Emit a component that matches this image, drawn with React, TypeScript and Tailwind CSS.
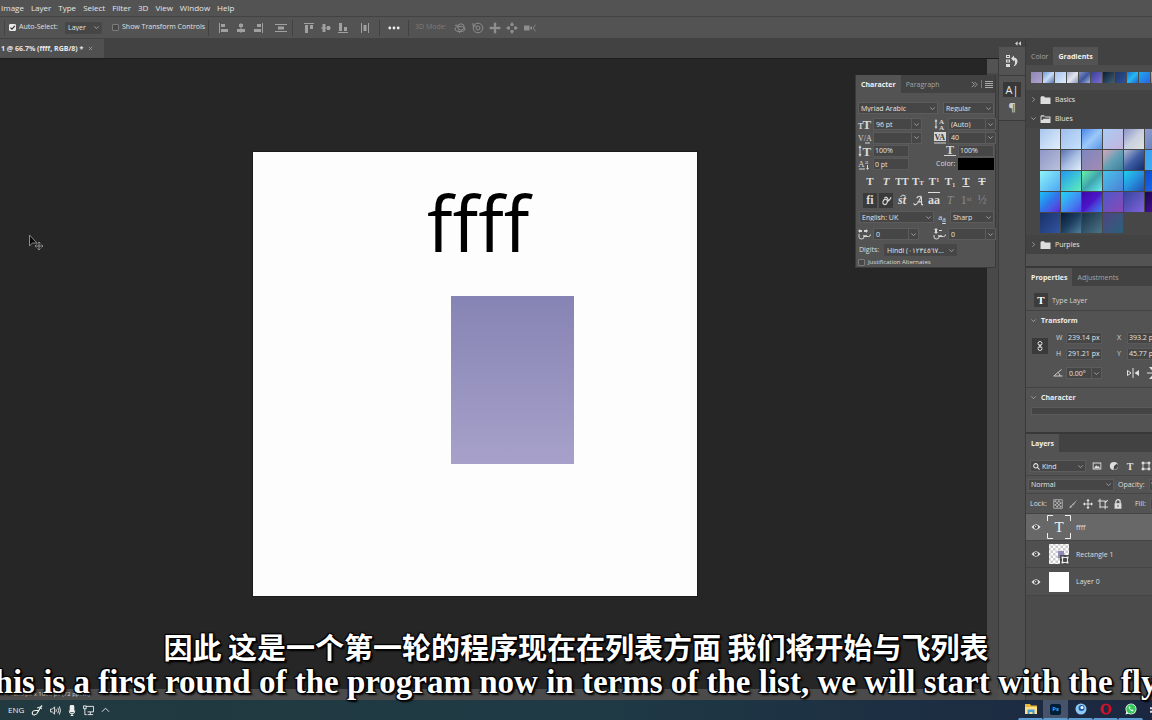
import React from "react";

const cx = (...parts: (string | false | undefined)[]) => parts.filter(Boolean).join(" ");

function Chevron({ className }: { className?: string }) {
  return (
    <svg viewBox="0 0 8 8" className={cx("size-[7px] shrink-0", className)} fill="none" stroke="#a9a9a9" strokeWidth="1">
      <path d="M1.5 2.8 4 5.3l2.5-2.5" />
    </svg>
  );
}

function Drop({ label, value, className, split }: { label: string; value: string; className: string; split?: boolean }) {
  return (
    <span className={cx("relative flex h-3 shrink-0 items-center border border-[#5c5c5c] bg-[#464646]", className)}>
      <select
        aria-label={label}
        className="h-full w-full min-w-0 appearance-none truncate bg-transparent pr-2 pl-[2px] leading-none text-[#e4e4e4] outline-none"
      >
        <option>{value}</option>
      </select>
      <span
        className={cx(
          "pointer-events-none absolute inset-y-0 right-0 flex items-center px-[1px]",
          split && "border-l border-[#5c5c5c]",
        )}
      >
        <Chevron />
      </span>
    </span>
  );
}

function Field({ label, value, className }: { label: string; value: string; className: string }) {
  return (
    <input
      aria-label={label}
      defaultValue={value}
      className={cx("h-3 min-w-0 border border-[#5a5a5a] bg-[#464646] px-px leading-none text-[#e4e4e4] outline-none", className)}
    />
  );
}

function Check({ label, checked, className }: { label: string; checked?: boolean; className?: string }) {
  return (
    <label className={cx("flex items-center gap-[3px] whitespace-nowrap", className)}>
      <span className="relative flex size-[7px]">
        <input
          type="checkbox"
          defaultChecked={checked}
          className="size-[7px] appearance-none rounded-[1px] border border-[#7c7c7c] bg-[#484848] checked:border-[#e8e8e8] checked:bg-[#e8e8e8]"
        />
        {checked && (
          <svg viewBox="0 0 7 7" className="pointer-events-none absolute inset-0" fill="none" stroke="#333" strokeWidth="1.2">
            <path d="M1.4 3.6 3 5.2 5.8 1.8" />
          </svg>
        )}
      </span>
      {label}
    </label>
  );
}

function Sep() {
  return <span className="h-4 w-px shrink-0 bg-[#414141]" />;
}

function Ico({
  label,
  children,
  className,
  box = "0 0 12 12",
}: {
  label: string;
  children: React.ReactNode;
  className?: string;
  box?: string;
}) {
  return (
    <button type="button" aria-label={label} className={cx("flex shrink-0 items-center justify-center", className)}>
      <svg viewBox={box} className="h-3 w-3" fill="currentColor">
        {children}
      </svg>
    </button>
  );
}

function MenuBar() {
  const items = ["Image", "Layer", "Type", "Select", "Filter", "3D", "View", "Window", "Help"];
  return (
    <nav className="flex h-[17px] items-center gap-[7px] border-b border-[#424242] bg-[#535353] pl-px text-[8px] text-[#e6e6e6]">
      {items.map((m) => (
        <button type="button" key={m} className="leading-none">
          {m}
        </button>
      ))}
    </nav>
  );
}

function OptionsBar() {
  return (
    <div className="flex h-[22px] items-center border-b border-[#424242] bg-[#535353] text-[7px] text-[#e0e0e0]">
      <span className="ml-1 h-4 w-px bg-[#454545]" />
      <Check label="Auto-Select:" checked className="ml-1 w-14" />
      <Drop label="Auto-select target" value="Layer" className="w-[37px] border-[#474747]" />
      <Check label="Show Transform Controls" className="ml-[10px] w-24" />
      <Sep />
      <div className="flex items-center pl-[6px] text-[#a0a0a0]">
        <Ico label="Align left edges" className="w-[17px]">
          <path d="M1 1h1v10H1zM3 2h4v3H3zM3 7h7v3H3z" />
        </Ico>
        <Ico label="Align horizontal centers" className="w-[17px]">
          <path d="M5.5 1h1v10h-1zM4 2h4v3H4zM2 7h8v3H2z" />
        </Ico>
        <Ico label="Align right edges" className="w-[17px]">
          <path d="M10 1h1v10h-1zM5 2h4v3H5zM2 7h7v3H2z" />
        </Ico>
        <Ico label="Distribute vertically" className="ml-[6px] w-[18px]">
          <path d="M0 2h12v1H0zM0 9h12v1H0zM3 4.5h6v3H3z" />
        </Ico>
      </div>
      <span className="ml-[2px] h-4 w-px bg-[#414141]" />
      <div className="flex items-center pl-[7px] text-[#a0a0a0]">
        <Ico label="Align top edges" className="w-[17px]">
          <path d="M1 1h10v1H1zM2 3h3v8H2zM7 3h3v4H7z" />
        </Ico>
        <Ico label="Align vertical centers" className="w-[17px]">
          <path d="M1 5.5h10v1H1zM2.500 2h3v8h-3zM7 4h3v4H7z" />
        </Ico>
        <Ico label="Align bottom edges" className="w-[18px]">
          <path d="M1 10h10v1H1zM2 1h3v8H2zM7 5h3v4H7z" />
        </Ico>
        <Ico label="Distribute horizontally" className="ml-[6px] w-[14px]">
          <path d="M2 1h1v10H2zM9 1h1v10H9zM4.500 3h3v6h-3z" />
        </Ico>
      </div>
      <span className="ml-[7px] h-4 w-px bg-[#414141]" />
      <Ico label="More options" className="mx-2 w-3 text-[#eeeeee]">
        <circle cx="1.800" cy="6" r="1.400" />
        <circle cx="6" cy="6" r="1.400" />
        <circle cx="10.200" cy="6" r="1.400" />
      </Ico>
      <Sep />
      <span className="ml-[6px] w-9 whitespace-nowrap text-[#7c7c7c]">3D Mode:</span>
      <div className="flex items-center text-[#8e8e8e]">
        <Ico label="Orbit" className="w-[18px]">
          <g fill="none" stroke="currentColor">
            <ellipse cx="6" cy="7" rx="5" ry="2.500" />
            <circle cx="7" cy="5" r="3.200" />
            <path d="M1 3.500 3.500 3M4 8.500 6 11" />
          </g>
        </Ico>
        <Ico label="Roll" className="w-[17px]">
          <g fill="none" stroke="currentColor">
            <circle cx="6" cy="6" r="4.800" />
            <circle cx="6" cy="6" r="2" />
            <path d="M1 1v3h3" />
          </g>
        </Ico>
        <Ico label="Pan" className="w-[17px]">
          <path d="m6 0 2 2.500H7V5h2.500V4L12 6 9.500 8V7H7v2.500h1L6 12 4 9.500h1V7H2.500v1L0 6l2.500-2v1H5V2.500H4z" />
          <circle cx="6" cy="6" r="2" />
        </Ico>
        <Ico label="Slide" className="w-[18px]">
          <path d="m6 0 2 2.500-1 1.500H5L4 2.500zM0 6l2.500-2L4 5v2L2.500 8zM12 6 9.500 4 8 5v2l1.500 1zM6 12l2-2.500L7 8H5L4 9.500z" />
        </Ico>
        <Ico label="Zoom camera" className="w-[18px]">
          <path d="M0 3.500h5.500v5H0zM5.500 6 8 4v4zM11.500 2v1L9.800 6l1.700 3v1L8.900 6z" />
        </Ico>
      </div>
    </div>
  );
}

function Serif({ children, className }: { children: React.ReactNode; className?: string }) {
  return <span className={cx("font-['Liberation_Serif',serif]", className)}>{children}</span>;
}

function PanelTabs({ tabs, active }: { tabs: string[]; active: number }) {
  return (
    <div role="tablist" className="flex h-[18px] shrink-0 bg-[#424242]">
      {tabs.map((t, i) => (
        <button
          type="button"
          role="tab"
          aria-selected={i === active}
          key={t}
          className={cx(
            "px-[5px] text-[7px] leading-none",
            i === active ? "bg-[#535353] font-bold text-[#f0f0f0]" : "text-[#a2a2a2]",
          )}
        >
          {t}
        </button>
      ))}
    </div>
  );
}

function CharIcon({ children }: { children: React.ReactNode }) {
  return (
    <svg viewBox="0 0 14 12" className="h-3 w-[14px] shrink-0 overflow-visible font-['Liberation_Serif',serif]" fill="#d6d6d6" stroke="none">
      {children}
    </svg>
  );
}

function CharacterPanel() {
  const row = "grid grid-cols-[75px_1fr] items-center";
  const cell = "flex items-center gap-[1px]";
  return (
    <section className="absolute top-0 right-[156px] z-10 w-[141px] border border-t-0 border-[#3a3a3a] bg-[#535353] text-[7px] text-[#dcdcdc]">
      <div className="relative">
        <PanelTabs tabs={["Character", "Paragraph"]} active={0} />
        <div className="absolute top-[5px] right-[2px] flex items-center gap-[3px] text-[#a8a8a8]">
          <svg viewBox="0 0 8 8" className="size-[7px]" fill="none" stroke="currentColor">
            <path d="m1 1 3 3-3 3M4 1l3 3-3 3" />
          </svg>
          <span className="h-2 w-px bg-[#777777]" />
          <svg viewBox="0 0 8 8" className="size-2" fill="currentColor">
            <path d="M0 1h8v1H0zM0 3h8v1H0zM0 5h8v1H0zM0 7h8v1H0z" />
          </svg>
        </div>
      </div>
      <div className="flex flex-col pt-2 pr-px pl-[2px]">
        <div className="flex h-[14px] items-center justify-between">
          <Drop label="Font family" value="Myriad Arabic" className="w-20" />
          <Drop label="Font style" value="Regular" className="w-[51px]" />
        </div>
        <div className={cx(row, "mt-[2px] h-[14px]")}>
          <div className={cell}>
            <CharIcon>
              <text x="0" y="11" fontSize="8" fontWeight="700">T</text>
              <text x="4.500" y="11" fontSize="13" fontWeight="700">T</text>
            </CharIcon>
            <Drop split label="Font size" value="96 pt" className="w-[49px]" />
          </div>
          <div className={cell}>
            <CharIcon>
              <text x="6" y="6" fontSize="7" fontWeight="700">A</text>
              <text x="6" y="12" fontSize="7" fontWeight="700">A</text>
              <path d="M3 1 4.500 3.500h-1v5h1L3 11 1.500 8.500h1v-5h-1z" />
            </CharIcon>
            <Drop split label="Leading" value="(Auto)" className="w-12" />
          </div>
        </div>
        <div className={cx(row, "h-[13px]")}>
          <div className={cell}>
            <CharIcon>
              <text x="0" y="9" fontSize="8">V/A</text>
              <path d="M7 10.500h5v1H7z" />
            </CharIcon>
            <Drop split label="Kerning" value="" className="w-[49px]" />
          </div>
          <div className={cell}>
            <CharIcon>
              <path d="M1 0h12v9H1zM1 10.500h12v1H1z" />
              <text x="1.500" y="8" fontSize="8" fontWeight="700" fill="#3c3c3c">VA</text>
            </CharIcon>
            <Drop split label="Tracking" value="40" className="w-12" />
          </div>
        </div>
        <div className={cx(row, "h-[13px]")}>
          <div className={cell}>
            <CharIcon>
              <path d="m2 0 1.500 3h-1v6h1L2 12 .5 9h1V3h-1z" />
              <text x="4.500" y="11" fontSize="13" fontWeight="700">T</text>
            </CharIcon>
            <Field label="Vertical scale" value="100%" className="w-9" />
          </div>
          <div className={cx(cell, "justify-end")}>
            <CharIcon>
              <text x="3" y="9" fontSize="12" fontWeight="700">T</text>
              <path d="M1 10h12v1H1z" />
            </CharIcon>
            <Field label="Horizontal scale" value="100%" className="w-9" />
          </div>
        </div>
        <div className={cx(row, "h-[14px]")}>
          <div className={cell}>
            <CharIcon>
              <text x="0" y="9" fontSize="9">A</text>
              <text x="7" y="6" fontSize="7">a</text>
              <path d="M1 10.500h6v1H1zM9 7h1v3h1l-1.500 2L8 10h1z" />
            </CharIcon>
            <Field label="Baseline shift" value="0 pt" className="w-9" />
          </div>
          <div className="flex items-center justify-between">
            <span className="pl-[3px]">Color:</span>
            <button type="button" aria-label="Text color" className="h-3 w-9 bg-black" />
          </div>
        </div>
        <div className="flex h-5 items-center pl-1 text-[11px] leading-none font-bold text-[#dedede]">
          <button type="button" className="w-4"><Serif>T</Serif></button>
          <button type="button" className="w-4"><Serif className="italic">T</Serif></button>
          <button type="button" className="w-4"><Serif className="text-[10px]">TT</Serif></button>
          <button type="button" className="w-4"><Serif>T<span className="text-[7px]">T</span></Serif></button>
          <button type="button" className="w-4"><Serif>T<sup className="text-[6px]">1</sup></Serif></button>
          <button type="button" className="w-4"><Serif>T<sub className="text-[6px]">1</sub></Serif></button>
          <button type="button" className="w-4"><Serif className="underline">T</Serif></button>
          <button type="button" className="w-4"><Serif className="line-through">T</Serif></button>
        </div>
        <div className="flex h-[18px] items-center pl-1 text-[12px] leading-none text-[#dedede]">
          <button type="button" className="h-[15px] w-4 border-x border-[#535353] bg-[#3a3a3a] font-bold"><Serif>fi</Serif></button>
          <button type="button" aria-label="Contextual alternates" className="flex h-[15px] w-4 items-center justify-center border-x border-[#535353] bg-[#3a3a3a]">
            <svg viewBox="0 0 12 12" className="size-[11px]" fill="none" stroke="currentColor" strokeWidth="1.200">
              <ellipse cx="4.500" cy="7.500" rx="2.300" ry="3" transform="rotate(25 4.500 7.500)" />
              <path d="M3.500 3.500Q5 1.500 6.500 3T8 6.500Q9.500 6 11 2.500" />
            </svg>
          </button>
          <button type="button" className="relative w-4">
            <Serif className="font-bold italic">st</Serif>
            <svg viewBox="0 0 6 3" className="absolute top-0 left-[6px] h-[3px] w-[6px]" fill="none" stroke="currentColor">
              <path d="M.5 3Q2-.5 5.500 2" />
            </svg>
          </button>
          <button type="button" aria-label="Swash" className="flex w-4 justify-center">
            <svg viewBox="0 0 12 12" className="size-[11px]" fill="none" stroke="currentColor" strokeWidth="1.200">
              <path d="M1 9q0 2 2 1.500T9 1.500L9.500 10.500h1.500M5 7.500h4.500M9 1.500Q5 1 4 3.500" />
            </svg>
          </button>
          <button type="button" className="w-4"><Serif className="font-bold overline">aa</Serif></button>
          <button type="button" className="w-4 text-[#8a8a8a]"><Serif className="italic">T</Serif></button>
          <button type="button" className="w-4 text-[#8a8a8a]"><Serif>1<sup className="text-[7px]">st</sup></Serif></button>
          <button type="button" className="w-4 text-[#8a8a8a]"><Serif>½</Serif></button>
        </div>
        <div className="flex h-4 items-center justify-between">
          <Drop label="Language" value="English: UK" className="ml-px w-[75px]" />
          <Serif className="text-[9px] leading-none">a<sub className="text-[8px] underline">a</sub></Serif>
          <Drop label="Anti-aliasing" value="Sharp" className="w-11" />
        </div>
        <div className={cx(row, "h-[18px]")}>
          <div className={cell}>
            <CharIcon>
              <path d="M0 3l2-2v1h2v2H2v1zM10 3 8 1v1H6v2h2v1z" />
              <path d="M1 6v3q0 2 2.500 2T6 9V7v1.500h2V7v1.500h2.500q2 0 2-2" fill="none" stroke="#d6d6d6" />
            </CharIcon>
            <Drop split label="Kashida width" value="0" className="w-[46px]" />
          </div>
          <div className={cell}>
            <CharIcon>
              <path d="M3 0l2 2H4v2h1L3 6 1 4h1V2H1zM6 2h3v1H6z" />
              <path d="M1 7v2q0 2 2.500 2T6 9V7v1.500h2V7v1.500h2.500q2 0 2-2" fill="none" stroke="#d6d6d6" />
            </CharIcon>
            <Drop split label="Diacritic position" value="0" className="w-12" />
          </div>
        </div>
        <div className="flex h-[14px] items-center gap-1">
          <span className="w-[22px] pl-px">Digits:</span>
          <Drop label="Digits" value="Hindi (٠١٢٣٤٥٦٧..." className="w-[73px] border-[#474747]" />
        </div>
        <Check label="Justification Alternates" className="h-[10px] text-[6px]" />
      </div>
    </section>
  );
}

function Workspace() {
  return (
    <section className="flex min-w-0 flex-1 flex-col">
      <div className="flex h-5 shrink-0 border-b border-[#1f1b20] bg-[#424242]">
        <button
          type="button"
          className="flex w-26 items-center gap-[5px] bg-[#505050] pl-px text-[7px] leading-none font-bold whitespace-nowrap text-[#e8e8e8]"
        >
          1 @ 66.7% (ffff, RGB/8) *
          <svg viewBox="0 0 6 6" className="size-[5px] shrink-0" fill="none" stroke="#9a9a9a">
            <path d="m1 1 4 4M5 1 1 5" />
          </svg>
        </button>
      </div>
      <div className="flex min-h-0 flex-1">
        <div className="min-w-0 flex-1 overflow-hidden bg-[#262626] pt-[92px] pl-[252px]">
          <div className="flex size-[446px] flex-col items-start border border-[#1b1b1b] bg-[#fdfdfd] pl-[198px]">
            <p className="-ml-6 h-[144px] pt-[21px] text-[76px] leading-[100px] text-black">ffff</p>
            <div className="h-[168px] w-[123px] bg-linear-to-b from-[#8684b4] to-[#a7a1ca]" />
          </div>
        </div>
        <div className="w-3 shrink-0 border-r border-[#3c3c3c] bg-[#494949]">
          <div className="h-[14px] bg-[#535353]" />
        </div>
      </div>
      <div className="h-[11px] shrink-0 bg-[#4b4b4b] pl-[10px] text-[6px] leading-[11px] text-[#cfcfcf]">
        1000 px x 1000 px (72 ppcm)
      </div>
    </section>
  );
}

function Dock() {
  return (
    <aside className="flex w-[26px] shrink-0 flex-col bg-[#4c4c4c]">
      <div className="flex h-2 items-center justify-end bg-[#424242] pr-1 text-[#d0d0d0]">
        <svg viewBox="0 0 8 6" className="h-[5px] w-[6px]" fill="currentColor">
          <path d="M3.500 0v6L0 3zM8 0v6L4.500 3z" />
        </svg>
      </div>
      <div className="flex h-[29px] items-center justify-center border-b border-[#3b3b3b] bg-[#535353]">
        <Ico label="History" className="w-5 text-[#dcdcdc]">
          <path d="M0 0h4v3H0zM0 4.500h4v3H0zM0 9h4v3H0z" />
          <path d="M1 1h2v1H1zM1 5.500h2v1H1z" fill="#535353" />
          <path d="M5 3.500 8 .5v2q3.500.5 3.500 4-.3 3.500-4 5 2-3 1.500-4.500Q8.800 5 8 5v1.500z" />
        </Ico>
      </div>
      <div className="flex h-[45px] flex-col items-center border-b border-[#3b3b3b] bg-[#535353] pt-[6px]">
        <button type="button" aria-label="Character" className="h-[15px] w-[18px] bg-[#383838] text-[11px] leading-[14px] text-[#e8e8e8]">
          A|
        </button>
        <button type="button" aria-label="Paragraph" className="mt-[3px] text-[11px] leading-[14px] font-bold text-[#cfcfcf]">
          ¶
        </button>
      </div>
      <div className="flex-1 bg-[#4f4f4f]" />
    </aside>
  );
}

const recent = [
  "from-[#8e86b8] to-[#b2a4cc]",
  "from-[#6f97dd] via-[#c8dcf5] to-[#5674b5]",
  "from-[#a9c4ec] to-[#dcebfa]",
  "from-[#a2a9cc] via-[#e3e6ef] to-[#8f97c2]",
  "from-[#8790c0] via-[#3d569d] to-[#a7b7da]",
  "from-[#3c3e94] to-[#7a6fd2]",
  "from-[#0c1e35] to-[#3e6177]",
  "from-[#1e3768] to-[#2f529a]",
  "from-[#1c75dd] via-[#29b8ee] to-[#2360d8]",
  "from-[#20a8ec] to-[#2c62e4]",
  "from-[#4bd0ed] to-[#2b6be4]",
];

const blues = [
  "from-[#a9c6ee] to-[#e2effb]",
  "from-[#9fbdee] to-[#c7e2fb]",
  "from-[#4a86e6] via-[#9cc8fa] to-[#5795e8]",
  "from-[#a9cdf4] to-[#c2b3dd]",
  "from-[#8c93c4] via-[#c8cfe0] to-[#dfe3dc]",
  "from-[#8f9ccc] to-[#5b79bb]",
  "from-[#8f97c8] to-[#bac0da]",
  "from-[#5c71b4] via-[#a6bce0] to-[#e1f0fa]",
  "from-[#7d86bd] to-[#a48bb5]",
  "from-[#d4a5bb] via-[#61a0b4] to-[#3f7f9c]",
  "from-[#b5b9d4] via-[#3e5ea3] to-[#142a6d]",
  "from-[#3d9cf0] to-[#3fb9f5]",
  "from-[#8ff3f6] to-[#4da7f3]",
  "from-[#2496ef] to-[#62edb5]",
  "from-[#6bf3a2] via-[#3fa4ae] to-[#67edf0]",
  "from-[#45c3e9] to-[#4d7fd6]",
  "from-[#1ad1ed] via-[#2890dc] to-[#2050b5]",
  "from-[#0a4ad0] to-[#2176ef]",
  "from-[#19bff5] via-[#2f74ea] to-[#5a1ddb]",
  "from-[#12d6f7] to-[#4c43e9]",
  "from-[#3e06a9] via-[#4c16c9] to-[#2d7df0]",
  "from-[#4a57cc] to-[#8848b4]",
  "from-[#34459e] to-[#8163dd]",
  "from-[#1c0554] to-[#5316a8]",
  "from-[#1a3167] to-[#3155a2]",
  "from-[#061a38] via-[#1e3f60] to-[#52809b]",
  "from-[#193246] to-[#4c7589]",
  "from-[#4c4483] to-[#26617a]",
];

function Folder({ open }: { open?: boolean }) {
  return (
    <svg viewBox="0 0 11 8" className="h-2 w-[11px] shrink-0">
      <path d="M.5 1.500V8h10V1.500H5L4 .3H1.200z" fill="#dddddd" />
      {open && <path d="M1.500 1.500h3L5.500 2.500h4v1.200h-6L2.500 5h-1z" fill="#4a4a4a" />}
    </svg>
  );
}

function GroupRow({ name, open }: { name: string; open?: boolean }) {
  return (
    <button type="button" className="flex h-[19px] w-full items-center bg-[#434343] pl-1 text-[7px] leading-none text-[#e6e6e6]">
      <Chevron className={cx("mr-[3px]", !open && "-rotate-90")} />
      <Folder open={open} />
      <span className="ml-1">{name}</span>
    </button>
  );
}

function GradientsPanel() {
  return (
    <section>
      <div className="h-2 bg-[#424242]" />
      <PanelTabs tabs={["Color", "Gradients"]} active={1} />
      <div className="flex h-[25px] gap-px bg-[#4c4c4c] pt-[7px] pl-[5px]">
        {recent.map((g, i) => (
          <button type="button" aria-label={"Recent gradient " + (i + 1)} key={g} className={cx("h-[11px] w-[11px] shrink-0 bg-linear-135", g)} />
        ))}
      </div>
      <GroupRow name="Basics" />
      <GroupRow name="Blues" open />
      <div className="grid grid-cols-[repeat(6,20px)] gap-px bg-[#474747] pt-px pb-[2px] pl-[14px]">
        {blues.map((g, i) => (
          <button type="button" aria-label={"Blue gradient " + (i + 1)} key={g} className={cx("size-5 bg-linear-135", g)} />
        ))}
      </div>
      <GroupRow name="Purples" />
      <div className="h-[14px] border-b-2 border-[#383838] bg-[#535353]" />
    </section>
  );
}

function SectionHead({ name }: { name: string }) {
  return (
    <h3 className="flex h-[19px] items-center gap-1 border-t border-[#434343] pl-1 font-bold text-[#ececec]">
      <Chevron />
      {name}
    </h3>
  );
}

function PropertiesPanel() {
  return (
    <section className="h-[166px] border-b-2 border-[#383838] bg-[#535353] text-[7px] leading-none text-[#d4d4d4]">
      <PanelTabs tabs={["Properties", "Adjustments"]} active={0} />
      <div className="flex h-6 items-center gap-1 pt-1 pl-2">
        <span className="flex size-[14px] items-center justify-center bg-[#3c3c3c] text-[11px] text-white">
          <Serif className="font-bold">T</Serif>
        </span>
        Type Layer
      </div>
      <SectionHead name="Transform" />
      <div className="flex h-[33px] items-center">
        <button type="button" aria-label="Link width and height" className="ml-[6px] flex h-4 w-4 shrink-0 items-center justify-center bg-[#3a3a3a]">
          <svg viewBox="0 0 6 10" className="h-[10px] w-[6px]" fill="none" stroke="#dddddd">
            <rect x="1" y=".5" width="4" height="4" rx="2" />
            <rect x="1" y="5.500" width="4" height="4" rx="2" />
            <path d="M3 3v4" />
          </svg>
        </button>
        <div className="ml-2 grid shrink-0 grid-cols-[10px_36px_25px_36px] items-center gap-y-1">
          <span>W</span>
          <Field label="Width" value="239.14 px" className="w-9" />
          <span className="pl-[15px]">X</span>
          <Field label="X position" value="393.2 px" className="w-9" />
          <span>H</span>
          <Field label="Height" value="291.21 px" className="w-9" />
          <span className="pl-[15px]">Y</span>
          <Field label="Y position" value="45.77 px" className="w-9" />
        </div>
      </div>
      <div className="flex h-[22px] items-center pl-[27px]">
        <svg viewBox="0 0 10 8" className="h-2 w-[10px] shrink-0" fill="none" stroke="#cccccc">
          <path d="M8.500.5.8 7h8.700M5 3.500q2 1.200 2 3.500" />
        </svg>
        <Drop split label="Angle" value="0.00°" className="ml-[3px] w-9" />
        <svg viewBox="0 0 12 10" className="ml-[25px] h-[10px] w-3 shrink-0" fill="#e0e0e0">
          <path d="M12 2v6L7.500 5zM5.500 0h1v10h-1z" />
          <path d="M.5 2.500v5L4 5z" fill="none" stroke="#e0e0e0" />
        </svg>
        <svg viewBox="0 0 12 12" className="ml-2 h-3 w-3 shrink-0" fill="#e0e0e0">
          <path d="M2 0h7L6 4.500zM0 5.500h12v1H0zM2 12h7L6 7.500z" />
        </svg>
      </div>
      <div className="pt-[3px]">
        <SectionHead name="Character" />
      </div>
      <div className="mt-[1px] ml-[5px] h-2 w-full border border-[#5b5b5b] bg-[#444444]" />
    </section>
  );
}

function Eye() {
  return (
    <button type="button" aria-label="Toggle visibility" className="flex h-full w-5 shrink-0 items-center justify-center">
      <svg viewBox="0 0 10 8" className="h-2 w-[10px]">
        <path d="M.5 4Q5-1.500 9.500 4 5 9.500.5 4z" fill="#e6e6e6" />
        <circle cx="5" cy="4" r="2" fill="#444444" />
        <circle cx="4.600" cy="3.600" r=".7" fill="#e6e6e6" />
      </svg>
    </button>
  );
}

function LayersPanel() {
  return (
    <section className="flex min-h-0 flex-1 flex-col bg-[#4b4b4b] text-[7px] leading-none text-[#dedede]">
      <PanelTabs tabs={["Layers"]} active={0} />
      <div className="flex h-6 shrink-0 items-center gap-[5px] border-b border-[#464646] bg-[#535353] pt-[5px] pl-1">
        <span className="relative flex shrink-0">
          <Drop label="Filter kind" value="Kind" className="w-14 pl-[9px]" />
          <svg viewBox="0 0 8 8" className="pointer-events-none absolute top-[3px] left-[3px] size-[7px]" fill="none" stroke="#e4e4e4" strokeWidth="1.200">
            <circle cx="3.200" cy="3.200" r="2.500" />
            <path d="M5 5l2.500 2.500" />
          </svg>
        </span>
        <Ico label="Filter pixel layers" className="w-3" box="-1 -1 14 14">
          <path d="M1 2h10v8H1zM2 3v6h8V3z" fillRule="evenodd" />
          <path d="M2.500 8.500 5 5l2 2 1-1 1.500 2.500z" />
        </Ico>
        <Ico label="Filter adjustment layers" className="w-3" box="-1 -1 14 14">
          <circle cx="6" cy="6" r="4.800" />
          <path d="M6 6 9.500 3a4.500 4.500 0 0 1-4 7.400z" fill="#454545" />
        </Ico>
        <button type="button" aria-label="Filter type layers" className="w-3 text-[10px]"><Serif className="font-bold">T</Serif></button>
        <Ico label="Filter shape layers" className="w-3" box="-1 -1 14 14">
          <path d="M2.500 2.500h7v7h-7z" fill="none" stroke="currentColor" />
          <path d="M1 1h3v3H1zM8 1h3v3H8zM1 8h3v3H1zM8 8h3v3H8z" />
        </Ico>
      </div>
      <div className="flex h-[18px] shrink-0 items-center gap-1 border-b border-[#464646] bg-[#535353] pl-[2px]">
        <Drop label="Blend mode" value="Normal" className="w-[86px]" />
        <span>Opacity:</span>
        <Field label="Opacity" value="100%" className="w-8 shrink-0" />
      </div>
      <div className="flex h-5 shrink-0 items-center border-b border-[#444444] bg-[#535353] pl-1">
        <span className="w-5 shrink-0">Lock:</span>
        <Ico label="Lock transparent pixels" className="w-[15px] text-[#b5b5b5]" box="-1 -1 14 14">
          <path d="M1 1h10v10H1z" fill="none" stroke="currentColor" />
          <path d="M2 2h2v2H2zM6 2h2v2H6zM4 4h2v2H4zM8 4h2v2H8zM2 6h2v2H2zM6 6h2v2H6zM4 8h2v2H4zM8 8h2v2H8z" />
        </Ico>
        <Ico label="Lock image pixels" className="w-[15px] text-[#b5b5b5]" box="-1 -1 14 14">
          <path d="M11 1 6 8 4.500 6.800zM4 7.500 5.300 8.700Q4 11 1 11 2.500 10 2.500 8.500 3 7.500 4 7.500z" />
        </Ico>
        <Ico label="Lock position" className="w-[15px]" box="-1 -1 14 14">
          <path d="m6 0 2 2.500H6.600v2.900h2.900V4L12 6 9.500 8V6.600H6.600v2.900H8L6 12 4 9.500h1.400V6.600H2.500V8L0 6l2.500-2v1.400h2.900V2.500H4z" />
        </Ico>
        <Ico label="Lock artboard nesting" className="w-[15px]" box="-1 -1 14 14">
          <path d="M2.500 0v11M0 2.500h8.500V12M12 9.500H2.500M8 5l3.500-3.500" fill="none" stroke="currentColor" strokeWidth="1.200" />
        </Ico>
        <Ico label="Lock all" className="w-[15px]" box="-1 -1 14 14">
          <path d="M2 5h8v6.500H2z" />
          <path d="M3.500 5V3.500a2.500 2.500 0 0 1 5 0V5" fill="none" stroke="currentColor" strokeWidth="1.500" />
          <path d="M5.500 7h1v2.500h-1z" fill="#444" />
        </Ico>
        <span className="mr-1 ml-[10px]">Fill:</span>
        <Field label="Fill" value="100%" className="w-8 shrink-0" />
      </div>
      <ul className="text-[7px]">
        <li className="flex h-[27px] items-center border-b border-[#444444] bg-[#686868]">
          <Eye />
          <span className="relative mx-px flex size-6 shrink-0 items-center justify-center text-[15px] text-[#f2f2f2]">
            <svg viewBox="0 0 24 24" className="absolute inset-0" fill="none" stroke="#eeeeee">
              <path d="M.5 6V.5H6M18 .5h5.500V6M23.500 18v5.500H18M6 23.500H.5V18" />
            </svg>
            <Serif>T</Serif>
          </span>
          <span className="ml-1">ffff</span>
        </li>
        <li className="flex h-[27px] items-center border-b border-[#444444] bg-[#505050]">
          <Eye />
          <svg viewBox="0 0 22 22" className="mx-[2px] size-[22px] shrink-0">
            <defs>
              <pattern id="checker" width="5" height="5" patternUnits="userSpaceOnUse">
                <path d="M0 0h5v5H0z" fill="#fff" />
                <path d="M0 0h2.500v2.500H0zM2.500 2.500H5V5H2.500z" fill="#cccccc" />
              </pattern>
            </defs>
            <path d="M1 1h20v20H1z" fill="url(#checker)" />
            <path d="M10 8h6v7h-6z" fill="#8e8bbb" />
            <path d="M12 12h10v10H12z" fill="#4a4a4a" />
            <path d="M14.500 14.500h5v5h-5z" fill="none" stroke="#e8e8e8" />
            <path d="M13.500 13.500h2v2h-2zM18.500 13.500h2v2h-2zM13.500 18.500h2v2h-2zM18.500 18.500h2v2h-2z" fill="#e8e8e8" />
          </svg>
          <span className="ml-1">Rectangle 1</span>
        </li>
        <li className="flex h-[28px] items-center border-b border-[#444444] bg-[#505050]">
          <Eye />
          <span className="mx-[3px] size-5 shrink-0 bg-white" />
          <span className="ml-1">Layer 0</span>
        </li>
      </ul>
    </section>
  );
}

function Taskbar() {
  const app = "flex h-full w-[25px] items-center justify-center border-b-2 border-x border-x-transparent border-[#5b9bd0]";
  return (
    <footer className="flex h-5 shrink-0 items-center bg-linear-to-r from-[#21393f] via-[#1f3a45] to-[#1b2740] text-[8px] text-[#eeeeee]">
      <span className="flex w-full items-center gap-[7px] pl-2">
        <span className="leading-none">ENG</span>
        <svg viewBox="0 0 12 12" className="size-3" fill="none" stroke="currentColor">
          <path d="M1 9.500q0-3 3-3h4M3 11q3 0 4-3l3-6q1-1 1 0L6 9M1.500 8.500q-1 3 2 2.500M6 4q3-2 5 1" />
        </svg>
        <svg viewBox="0 0 12 12" className="size-[11px]" fill="none" stroke="currentColor">
          <path d="M.5 4.500h2L5 2v8L2.500 7.500h-2zM6.500 4.500q1 1.500 0 3M8.500 3q2 3 0 6M10.200 1.500q2.500 4.500 0 9" />
        </svg>
        <svg viewBox="0 0 8 12" className="h-[11px] w-2" fill="currentColor">
          <rect x="1.500" y="0" width="5" height="8" rx="1.500" />
          <path d="M.5 6h1q0 3 2.500 3t2.500-3h1q0 3.500-3 4v1h1v1h-3v-1h1v-1q-3-.5-3-4z" />
        </svg>
        <svg viewBox="0 0 12 12" className="size-[11px]" fill="none" stroke="currentColor">
          <path d="M3 1.500h8.500v6H5M8 7.500v3M5 10.500h6M.5 1v3h3V1zM2 4v6.500h2" />
        </svg>
        <svg viewBox="0 0 10 6" className="h-[6px] w-[9px]" fill="none" stroke="currentColor">
          <path d="m1 5 4-4 4 4" />
        </svg>
      </span>
      <span className="flex h-full shrink-0 items-center">
        <button type="button" aria-label="File Explorer" className={app}>
          <svg viewBox="0 0 12 10" className="h-[10px] w-3">
            <path d="M0 0h5l1 1.500h6V10H0z" fill="#e8b93e" />
            <path d="M0 3h12v7H0z" fill="#fbe08a" />
            <path d="M2.500 5.500h7V10h-2V8h-3v2h-2z" fill="#4c9cd4" />
          </svg>
        </button>
        <button type="button" aria-label="Photoshop" className={cx(app, "bg-[#47526b]")}>
          <span className="flex size-[11px] items-center justify-center rounded-[2px] bg-[#001e36] text-[6px] leading-none font-bold text-[#31a8ff]">
            Ps
          </span>
        </button>
        <button type="button" aria-label="Browser" className={app}>
          <svg viewBox="0 0 12 12" className="size-3">
            <circle cx="6" cy="6" r="5.500" fill="#8fc9f3" />
            <circle cx="6.500" cy="5" r="3" fill="#1c5fae" />
            <circle cx="7" cy="4.500" r="1.500" fill="#fff" />
          </svg>
        </button>
        <button type="button" aria-label="Opera" className={app}>
          <svg viewBox="0 0 12 12" className="size-3">
            <circle cx="6" cy="6" r="5.500" fill="#d0142c" />
            <ellipse cx="6" cy="6" rx="2.300" ry="4" fill="#1c2940" />
            <path d="M7 1q5 5 0 10 2-5 0-10z" fill="#8e0f20" />
          </svg>
        </button>
        <button type="button" aria-label="WhatsApp" className={app}>
          <svg viewBox="0 0 12 12" className="size-3">
            <path d="M6 .5a5.500 5.500 0 1 1-2.700 10.300L.5 11.500l.8-2.700A5.500 5.500 0 0 1 6 .5z" fill="#e7f7ec" />
            <circle cx="6" cy="6" r="4.700" fill="#35c759" />
            <path d="M4 3.500q-1 1 .8 3.200T8.500 8.200L8.300 7 7 6.500l-.6.6Q5.300 6.500 5 5.500l.5-.6L5 3.500z" fill="#fff" />
          </svg>
        </button>
        <span className="flex w-[9px] justify-end">
          <svg viewBox="0 0 3 8" className="h-2 w-[2px]" fill="#dddddd">
            <path d="M0 0h3v3H0zM0 5h3v3H0z" />
          </svg>
        </span>
      </span>
    </footer>
  );
}

export default function App() {
  return (
    <div className="relative flex h-screen flex-col overflow-hidden bg-[#424242] font-['Open_Sans','DejaVu_Sans',sans-serif]">
      <MenuBar />
      <OptionsBar />
      <main className="relative flex min-h-0 flex-1">
        <Workspace />
        <Dock />
        <div className="flex w-[127px] shrink-0 flex-col overflow-hidden border-l border-[#3a3a3a]">
          <GradientsPanel />
          <PropertiesPanel />
          <LayersPanel />
        </div>
        <div className="absolute top-9 right-0 left-0">
          <CharacterPanel />
        </div>
        <svg viewBox="0 0 16 18" className="absolute top-[195px] left-[28px] h-[18px] w-4" fill="#0a0a0a" stroke="#8c8c8c">
          <path d="M1.500 1v11l3-3H9z" />
          <path d="M11 8v8M7 12h8M9.500 9.500 11 8l1.500 1.500M9.500 14.500 11 16l1.500-1.500M8.500 10.500 7 12l1.500 1.500M13.500 10.500 15 12l-1.500 1.500" />
        </svg>
      </main>
      <Taskbar />
      <div className="pointer-events-none absolute inset-x-0 bottom-5 z-20 flex flex-col items-center font-bold whitespace-nowrap text-white [text-shadow:1px_1px_1px_#000,-1px_-1px_1px_#000,1px_-1px_1px_#000,-1px_1px_1px_#000,2px_2px_2px_#000]">
        <p lang="zh" className="font-['Noto_Sans_CJK_SC',sans-serif] text-[29px] leading-9">
          因此 这是一个第一轮的程序现在在列表方面 我们将开始与飞列表
        </p>
        <p className="font-['Liberation_Serif',serif] text-[33px] leading-9">
          his is a first round of the program now in terms of the list, we will start with the fly
        </p>
      </div>
    </div>
  );
}
